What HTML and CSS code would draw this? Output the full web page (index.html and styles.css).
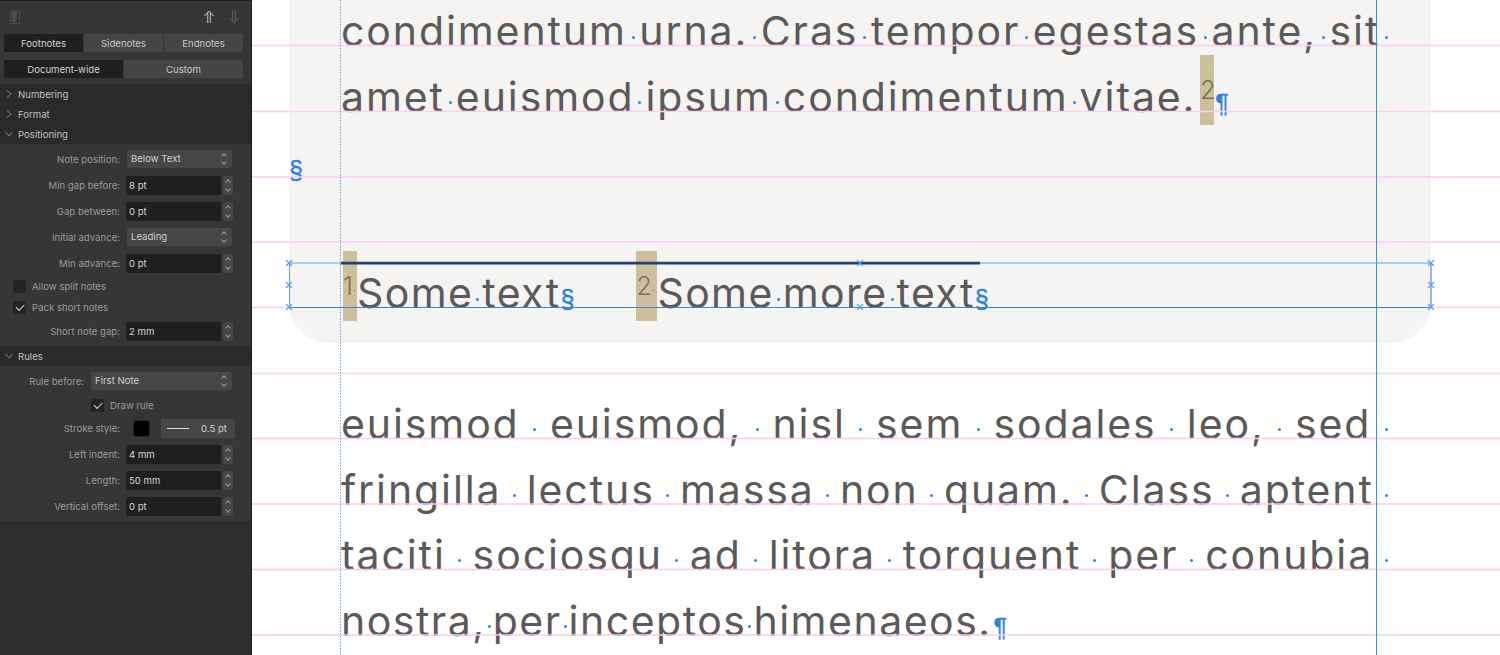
FILE: index.html
```html
<!DOCTYPE html>
<html lang="en">
<head>
  <meta charset="UTF-8" />
  <title>Footnotes</title>
  <link rel="stylesheet" href="styles.css">
</head>
<body>

  <aside class="panel">
    <div class="topbar">
      <svg class="book" width="12" height="15" viewBox="0 0 12 15"><path d="M1.5 1.5H10.5V13.5H1.5Z" stroke="#4a4a4a" fill="none"/><path d="M3 0.5H8V8L7 12H3Z" fill="#4c4c4c"/></svg>
      <div class="arrows">
        <svg width="12" height="14" viewBox="0 0 12 14"><path d="M6 1 L1.5 6 M6 1 L10.5 6 M4.7 3 V13 M7.3 3 V13" stroke="#b4b4b4" stroke-width="1.1" fill="none"/></svg>
        <svg width="12" height="14" viewBox="0 0 12 14"><path d="M6 13 L1.5 8 M6 13 L10.5 8 M4.7 1 V11 M7.3 1 V11" stroke="#5e5e5e" stroke-width="1.1" fill="none"/></svg>
      </div>
    </div>

    <div class="tabs">
      <button class="tab active">Footnotes</button>
      <button class="tab">Sidenotes</button>
      <button class="tab">Endnotes</button>
    </div>
    <div class="tabs second">
      <button class="tab active">Document-wide</button>
      <button class="tab">Custom</button>
    </div>

    <div class="section-head"><svg class="chev" width="8" height="8" viewBox="0 0 8 8"><path d="M2 0.5L6 4L2 7.5"/></svg>Numbering</div>
    <div class="section-head"><svg class="chev" width="8" height="8" viewBox="0 0 8 8"><path d="M2 0.5L6 4L2 7.5"/></svg>Format</div>
    <div class="section-head"><svg class="chev" width="8" height="8" viewBox="0 0 8 8"><path d="M0.5 2L4 6L7.5 2"/></svg>Positioning</div>

    <div class="section-body">
      <div class="row"><label>Note position:</label><div class="select">Below Text<span class="updown"></span></div></div>
      <div class="row"><label>Min gap before:</label><div class="field">8 pt</div><div class="stepper"></div></div>
      <div class="row"><label>Gap between:</label><div class="field">0 pt</div><div class="stepper"></div></div>
      <div class="row"><label>Initial advance:</label><div class="select">Leading<span class="updown"></span></div></div>
      <div class="row"><label>Min advance:</label><div class="field">0 pt</div><div class="stepper"></div></div>
      <div class="check-row"><span class="check"></span>Allow split notes</div>
      <div class="check-row"><span class="check on"></span>Pack short notes</div>
      <div class="row"><label>Short note gap:</label><div class="field">2 mm</div><div class="stepper"></div></div>
    </div>

    <div class="section-head"><svg class="chev" width="8" height="8" viewBox="0 0 8 8"><path d="M0.5 2L4 6L7.5 2"/></svg>Rules</div>

    <div class="section-body">
      <div class="row short"><label>Rule before:</label><div class="select">First Note<span class="updown"></span></div></div>
      <div class="check-row indented"><span class="check on"></span>Draw rule</div>
      <div class="row stroke-row">
        <label>Stroke style:</label>
        <span class="swatch"></span>
        <div class="stroke-box"><span class="stroke-line"></span>0.5 pt</div>
      </div>
      <div class="row"><label>Left indent:</label><div class="field">4 mm</div><div class="stepper"></div></div>
      <div class="row"><label>Length:</label><div class="field">50 mm</div><div class="stepper"></div></div>
      <div class="row"><label>Vertical offset:</label><div class="field">0 pt</div><div class="stepper"></div></div>
    </div>
  </aside>

  <main class="canvas">
    <div class="card">
      <div class="line just">
        <span>condimentum</span><i class="dot"></i><span>urna.</span><i class="dot"></i><span>Cras</span><i class="dot"></i><span>tempor</span><i class="dot"></i><span>egestas</span><i class="dot"></i><span>ante,</span><i class="dot"></i><span>sit</span><i class="dot"></i>
      </div>
      <div class="line">
        <span>amet</span><i class="dot"></i><span>euismod</span><i class="dot"></i><span>ipsum</span><i class="dot"></i><span>condimentum</span><i class="dot"></i><span>vitae.</span><span class="mark">2</span><span class="para">¶</span>
      </div>

      <div class="notes">
        <div class="line note">
          <span class="mark thin">1<small>·</small></span><span>Some</span><i class="dot"></i><span>text</span><span class="para">§</span>
        </div>
        <div class="line note">
          <span class="mark wide">2<small>·</small></span><span>Some</span><i class="dot"></i><span>more</span><i class="dot"></i><span>text</span><span class="para">§</span>
        </div>
      </div>
    </div>

    <div class="body-text">
      <div class="line just">
        <span>euismod</span><i class="dot"></i><span>euismod,</span><i class="dot"></i><span>nisl</span><i class="dot"></i><span>sem</span><i class="dot"></i><span>sodales</span><i class="dot"></i><span>leo,</span><i class="dot"></i><span>sed</span><i class="dot"></i>
      </div>
      <div class="line just">
        <span>fringilla</span><i class="dot"></i><span>lectus</span><i class="dot"></i><span>massa</span><i class="dot"></i><span>non</span><i class="dot"></i><span>quam.</span><i class="dot"></i><span>Class</span><i class="dot"></i><span>aptent</span><i class="dot"></i>
      </div>
      <div class="line just">
        <span>taciti</span><i class="dot"></i><span>sociosqu</span><i class="dot"></i><span>ad</span><i class="dot"></i><span>litora</span><i class="dot"></i><span>torquent</span><i class="dot"></i><span>per</span><i class="dot"></i><span>conubia</span><i class="dot"></i>
      </div>
      <div class="line last">
        <span>nostra,</span><i class="dot"></i><span>per</span><i class="dot"></i><span>inceptos</span><i class="dot"></i><span>himenaeos.</span><span class="para">¶</span>
      </div>
    </div>

    <span class="section-mark">§</span>

    <!-- baseline grid, margins and the selected frame -->
    <svg class="overlay" width="1248" height="655" viewBox="252 0 1248 655">
      <path stroke="#f9cdf6" stroke-width="1.4" d="M252 45.5H1500 M252 111.5H1500 M252 177H1500 M252 242H1500 M252 307.5H289 M1431 307.5H1500 M252 373.5H1500 M252 438.5H1500 M252 504H1500 M252 569.5H1500 M252 635H1500"/>
      <path d="M340.5 0V655" stroke="#55a6ee" stroke-width="1" stroke-dasharray="1.5 1.5"/>
      <path d="M1376.5 0V655" stroke="#2f93e6" stroke-width="1"/>
      <path d="M289 263H1431" stroke="#5b9ee8" stroke-width="1"/>
      <path d="M289 307.5H1431" stroke="#3a7fd8" stroke-width="1"/>
      <path d="M341 263.2H980" stroke="#1f4175" stroke-width="2.8"/>
      <path d="M289.5 263V307" stroke="#5b9ee8" stroke-width="1"/>
      <path d="M1431 263V307" stroke="#8bbcf0" stroke-width="2"/>
      <g stroke="#5b9ee8" stroke-width="1.1" fill="none">
        <path d="M286 260l6 6m0-6l-6 6"/>
        <path d="M286 282l6 6m0-6l-6 6"/>
        <path d="M286 304l6 6m0-6l-6 6"/>
        <path d="M857 260l6 6m0-6l-6 6"/>
        <path d="M857 304l6 6m0-6l-6 6"/>
        <path d="M1428 260l6 6m0-6l-6 6"/>
        <path d="M1428 282l6 6m0-6l-6 6"/>
        <path d="M1428 304l6 6m0-6l-6 6"/>
      </g>
    </svg>
  </main>

</body>
</html>
```

FILE: styles.css
```css
* {
  margin: 0;
  padding: 0;
  box-sizing: border-box;
}

body {
  display: flex;
  width: 1500px;
  height: 655px;
  overflow: hidden;
  background: #fff;
}

/* side panel */

.panel {
  width: 252px;
  height: 655px;
  flex-shrink: 0;
  background: #2d2d2d;
  border-right: 1px solid #1a1a1a;
  font-family: 'Inter', sans-serif;
  font-size: 9.6px;
  color: #c4c4c4;
}

.topbar {
  height: 34px;
  padding: 9px 11px 0 9px;
  display: flex;
  justify-content: space-between;
  align-items: flex-start;
  background: #363636;
  border-top: 1px solid #1c1c1c;
}

.arrows {
  display: flex;
  gap: 13px;
}

.tabs {
  display: flex;
  gap: 1px;
  padding: 0 8px 8px 4px;
  background: #363636;
}

.tabs.second {
  padding-bottom: 6px;
}

.tab {
  flex: 1;
  height: 18px;
  border: none;
  border-radius: 0 2px 2px 0;
  background: #454545;
  color: #c8c8c8;
  font-family: inherit;
  font-size: 9.6px;
}

.tab.active {
  background: #1f1f1f;
  color: #d4d4d4;
  border-radius: 2px 0 0 2px;
}

.section-head {
  height: 20px;
  padding-left: 18px;
  position: relative;
  line-height: 21px;
  background: #2a2a2a;
  color: #c0c0c0;
}

.chev {
  position: absolute;
  left: 5px;
  top: 6px;
  fill: none;
  stroke: #8a8a8a;
  stroke-width: 0.9;
}

.section-body {
  padding: 2px 0;
  background: #363636;
}

.row {
  display: flex;
  align-items: center;
  height: 26px;
}

.row label {
  width: 120px;
  margin-right: 6px;
  text-align: right;
  color: #9a9a9a;
}

.row.short label {
  width: 84px;
}

.field {
  width: 95px;
  height: 19px;
  padding-left: 3px;
  line-height: 19px;
  background: #1f1f1f;
  border-radius: 2px;
  color: #d6d6d6;
}

.stepper {
  width: 10px;
  height: 19px;
  margin-left: 2px;
  background: #464646;
  border-radius: 2px;
  position: relative;
}

.stepper::before,
.stepper::after,
.updown::before,
.updown::after {
  content: '';
  position: absolute;
  left: 3px;
  width: 3px;
  height: 3px;
  border-left: 1px solid #9a9a9a;
  border-top: 1px solid #9a9a9a;
}

.stepper::before,
.updown::before {
  top: 4px;
  transform: rotate(45deg);
}

.stepper::after,
.updown::after {
  bottom: 4px;
  transform: rotate(225deg);
}

.select {
  flex: 1;
  max-width: 105px;
  height: 18px;
  margin-left: 1px;
  padding-left: 4px;
  line-height: 17px;
  background: #464646;
  border-radius: 2px;
  color: #cfcfcf;
  position: relative;
}

.row.short .select {
  max-width: 141px;
}

.updown {
  position: absolute;
  right: 3px;
  top: 0;
  width: 10px;
  height: 18px;
}

.check-row {
  display: flex;
  align-items: center;
  height: 21px;
  padding-left: 13px;
  color: #9a9a9a;
}

.check-row.indented {
  height: 22px;
  padding-left: 91px;
}

.check {
  width: 13px;
  height: 13px;
  margin-right: 6px;
  background: #242424;
  border-radius: 2px;
  position: relative;
}

.check.on::after {
  content: '';
  position: absolute;
  left: 3px;
  top: 3px;
  width: 7px;
  height: 3.5px;
  border-left: 1.2px solid #ddd;
  border-bottom: 1.2px solid #ddd;
  transform: rotate(-45deg);
}

.stroke-row {
  height: 25px;
}

.swatch {
  width: 17px;
  height: 17px;
  margin-left: 7px;
  background: #000;
  border: 1px solid #262626;
  border-radius: 3px;
}

.stroke-box {
  width: 74px;
  height: 19px;
  margin-left: 11px;
  padding: 0 8px 0 6px;
  display: flex;
  align-items: center;
  justify-content: space-between;
  background: #464646;
  border-radius: 2px;
  color: #cfcfcf;
}

.stroke-line {
  width: 22px;
  height: 1px;
  background: #ddd;
}

/* document */

.canvas {
  flex: 1;
  position: relative;
  overflow: hidden;
  font-family: 'Inter', sans-serif;
  font-weight: 400;
  font-size: 41px;
  letter-spacing: 1.9px;
  color: #5c5959;
}

.card {
  display: flow-root;
  width: 1142px;
  height: 343px;
  margin-left: 37px;
  padding: 0 0 0 52px;
  background: #f5f4f2;
  border-radius: 0 0 40px 40px;
}

.body-text {
  margin: 49px 0 0 89px;
}

.line {
  display: flex;
  align-items: baseline;
  gap: 4px;
  width: 1047px;
  height: 65.56px;
  line-height: 65.56px;
  white-space: nowrap;
}

.card > .line:first-child {
  margin-top: -0.7px;
}

.line.just {
  justify-content: space-between;
  gap: 0;
}

.line.last {
  gap: 2px;
  letter-spacing: 1.5px;
}

.dot {
  align-self: flex-start;
  width: 3px;
  height: 3px;
  margin-top: 36.4px;
  background: #2e86e6;
  border-radius: 50%;
}

.mark {
  align-self: flex-start;
  width: 14px;
  height: 70px;
  margin: -10.3px -3px 0 0;
  padding-top: 20px;
  background: #cdbf9b;
  color: #7d7152;
  font-size: 25px;
  font-weight: 300;
  letter-spacing: 0;
  line-height: 30px;
  overflow: hidden;
}

.mark.thin {
  margin-left: 2px;
}

.mark.wide {
  width: 21px;
}

.mark small {
  font-size: 12px;
}

.para {
  font-family: 'Liberation Sans', sans-serif;
  font-weight: 400;
  font-size: 25px;
  letter-spacing: 0;
  color: #2a80e4;
  -webkit-text-stroke: 0.4px #2a80e4;
}

.notes {
  display: flex;
  margin-top: 131px;
}

.note {
  width: auto;
  gap: 3px;
  letter-spacing: 1.4px;
}

.note .para {
  margin-left: -3px;
}

.note + .note {
  margin-left: 62px;
}

.section-mark {
  position: absolute;
  left: 37px;
  top: 150px;
  font-family: 'Liberation Sans', sans-serif;
  font-weight: 400;
  font-size: 25px;
  letter-spacing: 0;
  line-height: 40px;
  color: #2a80e4;
  -webkit-text-stroke: 0.4px #2a80e4;
}

.overlay {
  position: absolute;
  left: 0;
  top: 0;
  pointer-events: none;
}
```
